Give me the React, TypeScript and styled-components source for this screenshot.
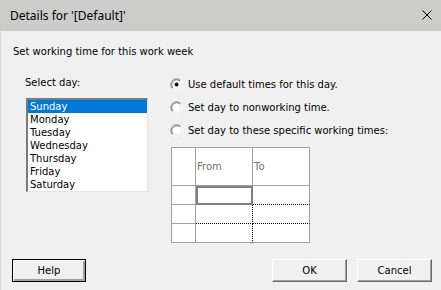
import React from 'react';
import styled, { createGlobalStyle } from 'styled-components';

const GlobalStyle = createGlobalStyle`
    html, body {
        margin: 0;
        padding: 0;
        background: #f0f0f0;
    }
    * {
        box-sizing: border-box;
    }
`;

const Window = styled.div`
    width: 441px;
    height: 290px;
    display: flex;
    flex-direction: column;
    font-family: 'DejaVu Sans', 'Liberation Sans', sans-serif;
    font-size: 10px;
    color: #000;
`;

const TitleBar = styled.div`
    height: 31px;
    flex: none;
    background: #cccdca;
    display: flex;
    align-items: center;
    justify-content: space-between;
    padding: 0 9px 0 10px;
`;

const Title = styled.span`
    font-family: 'Noto Sans', 'Liberation Sans', sans-serif;
    font-size: 12px;
`;

const CloseButton = styled.div`
    width: 10px;
    height: 10px;
    display: flex;
    margin-top: -1px;
`;

const Body = styled.div`
    flex: 1;
    display: flex;
    flex-direction: column;
    padding: 14px 9px 8px 0;
    border-left: 1px solid #d9d9d9;
`;

const Heading = styled.div`
    line-height: 14px;
    padding-left: 12px;
`;

const Main = styled.div`
    display: flex;
    gap: 22px;
    margin-top: 14px;
    padding-left: 24px;
`;

const LeftColumn = styled.div`
    display: flex;
    flex-direction: column;
    padding-top: 3px;
`;

const Label = styled.div`
    line-height: 14px;
`;

const ListBox = styled.div`
    width: 122px;
    margin: 8px 0 0 1px;
    background: #fff;
    border-style: solid;
    border-width: 2px 1px 1px 2px;
    border-color: #7a7a7a #e3e3e3 #e3e3e3 #7a7a7a;
    display: flex;
    flex-direction: column;
`;

const ListItem = styled.div<{ $selected?: boolean }>`
    height: 13px;
    line-height: 13px;
    padding-left: 2px;
    background: ${(p) => (p.$selected ? '#0078d7' : 'transparent')};
    color: ${(p) => (p.$selected ? '#fff' : '#000')};
`;

const RightColumn = styled.div`
    display: flex;
    flex-direction: column;
`;

const RadioRow = styled.label`
    height: 23px;
    display: flex;
    align-items: center;
    gap: 5px;
`;

const TimeGrid = styled.div`
    margin: 5px 0 0 1px;
    width: 139px;
    display: grid;
    grid-template-columns: 24px 57px 57px;
    grid-template-rows: 38px 19px 19px 19px;
    border-left: 1px solid #a0a0a0;
    border-top: 1px solid #a0a0a0;
    background: #fff;
`;

const Cell = styled.div<{ $head?: boolean; $lastCol?: boolean; $lastRow?: boolean; $selected?: boolean }>`
    display: flex;
    align-items: center;
    padding-left: 1px;
    color: #707070;
    border-right: 1px ${(p) => (p.$head || p.$lastCol ? 'solid #a0a0a0' : 'dotted #000')};
    border-bottom: 1px ${(p) => (p.$head || p.$lastRow ? 'solid #a0a0a0' : 'dotted #000')};
    ${(p) =>
        p.$selected &&
        `
        border-right: 1px solid #808080;
        border-bottom: 1px solid #808080;
        box-shadow: inset 2px 2px 0 #808080, inset -1px -1px 0 #808080;
    `}
`;

const Footer = styled.div`
    margin-top: auto;
    display: flex;
    align-items: center;
    padding-left: 11px;
`;

const Button = styled.button<{ $focused?: boolean }>`
    width: ${(p) => (p.$focused ? 74 : 75)}px;
    height: 23px;
    padding: 0;
    background: #f0f0f0;
    font-family: 'DejaVu Sans', 'Liberation Sans', sans-serif;
    font-size: 10px;
    color: #000;
    border: 1px solid;
    border-color: ${(p) => (p.$focused ? '#000' : '#fff #696969 #696969 #fff')};
    box-shadow: ${(p) =>
        p.$focused
            ? 'inset 1px 1px 0 #fff, inset -2px -2px 0 #a0a0a0'
            : 'inset -1px -1px 0 #a0a0a0'};
`;

const Spacer = styled.div`
    flex: 1;
`;

const ButtonGroup = styled.div`
    display: flex;
    gap: 10px;
`;

function Radio({ checked }: { checked?: boolean }) {
    return (
        <svg width="13" height="13" viewBox="0 0 13 13">
            <circle cx="6.5" cy="6.5" r="5.5" fill="#fff" />
            <path d="M2.26 10.74A6 6 0 0 1 10.74 2.26" fill="none" stroke="#a0a0a0" />
            <path d="M10.74 2.26A6 6 0 0 1 2.26 10.74" fill="none" stroke="#fff" />
            <path d="M2.97 10.03A5 5 0 0 1 10.03 2.97" fill="none" stroke="#696969" />
            <path d="M10.03 2.97A5 5 0 0 1 2.97 10.03" fill="none" stroke="#e3e3e3" />
            {checked && <circle cx="6.5" cy="6.5" r="2" fill="#000" />}
        </svg>
    );
}

const days = ['Sunday', 'Monday', 'Tuesday', 'Wednesday', 'Thursday', 'Friday', 'Saturday'];

function App() {
    return (
        <Window>
            <GlobalStyle />
            <TitleBar>
                <Title>Details for '[Default]'</Title>
                <CloseButton>
                    <svg width="10" height="10" viewBox="0 0 10 10">
                        <path d="M0.5 0.5L9.5 9.5M9.5 0.5L0.5 9.5" stroke="#000" strokeWidth="1" />
                    </svg>
                </CloseButton>
            </TitleBar>
            <Body>
                <Heading>Set working time for this work week</Heading>
                <Main>
                    <LeftColumn>
                        <Label>Select day:</Label>
                        <ListBox>
                            {days.map((d, i) => (
                                <ListItem key={d} $selected={i === 0}>
                                    {d}
                                </ListItem>
                            ))}
                        </ListBox>
                    </LeftColumn>
                    <RightColumn>
                        <RadioRow>
                            <Radio checked />
                            Use default times for this day.
                        </RadioRow>
                        <RadioRow>
                            <Radio />
                            Set day to nonworking time.
                        </RadioRow>
                        <RadioRow>
                            <Radio />
                            Set day to these specific working times:
                        </RadioRow>
                        <TimeGrid>
                            <Cell $head />
                            <Cell $head>From</Cell>
                            <Cell $head $lastCol>To</Cell>
                            {[0, 1, 2].map((r) => (
                                <React.Fragment key={r}>
                                    <Cell $head $lastRow={r === 2} />
                                    <Cell $lastRow={r === 2} $selected={r === 0} />
                                    <Cell $lastCol $lastRow={r === 2} />
                                </React.Fragment>
                            ))}
                        </TimeGrid>
                    </RightColumn>
                </Main>
                <Footer>
                    <Button $focused>Help</Button>
                    <Spacer />
                    <ButtonGroup>
                        <Button>OK</Button>
                        <Button>Cancel</Button>
                    </ButtonGroup>
                </Footer>
            </Body>
        </Window>
    );
}

export default App;
